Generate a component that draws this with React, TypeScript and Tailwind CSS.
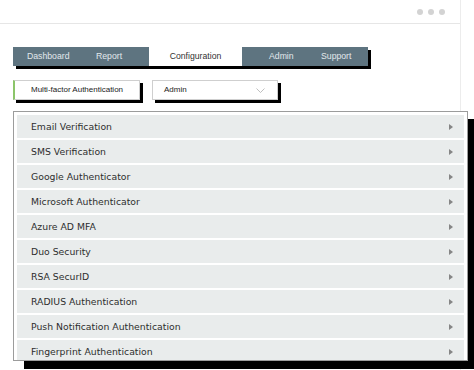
const methods = [
  "Email Verification",
  "SMS Verification",
  "Google Authenticator",
  "Microsoft Authenticator",
  "Azure AD MFA",
  "Duo Security",
  "RSA SecurID",
  "RADIUS Authentication",
  "Push Notification Authentication",
  "Fingerprint Authentication"
];

function Dots() {
  return (
    <div className="flex h-[24px] items-center justify-end gap-[5px] border-b border-[#e6e6e6] pr-[15px]">
      <span className="h-[6px] w-[6px] rounded-full bg-[#d3d3d3]" />
      <span className="h-[6px] w-[6px] rounded-full bg-[#d3d3d3]" />
      <span className="h-[6px] w-[6px] rounded-full bg-[#d3d3d3]" />
    </div>
  );
}

function NavBar() {
  return (
    <nav className="flex h-[19px] w-[355px] items-stretch bg-[#5e7480] text-[8.7px] text-[#e2e8ec] shadow-[3px_3px_0_#000]">
      <span className="flex w-[70px] items-center pl-[14px]">Dashboard</span>
      <span className="flex w-[66px] items-center pl-[13px]">Report</span>
      <span className="flex w-[93px] items-center justify-center bg-white text-[#333]">Configuration</span>
      <span className="flex w-[79px] items-center pl-[27px]">Admin</span>
      <span className="flex items-center">Support</span>
    </nav>
  );
}

function Filters() {
  return (
    <div className="mt-[14px] flex gap-[12px] text-[8px] text-[#222]">
      <div className="flex h-[20px] w-[127px] items-center border border-l-2 border-[#cfcfcf] border-l-[#8cc56a] bg-white pl-[16px] shadow-[3px_3px_0_#000]">
        Multi-factor Authentication
      </div>
      <div className="flex h-[20px] w-[126px] items-center justify-between border border-[#cfcfcf] bg-white pl-[11px] pr-[12px] shadow-[3px_3px_0_#000]">
        <span>Admin</span>
        <svg width="9" height="5" viewBox="0 0 9 5" fill="none">
          <polyline points="0.5,0.5 4.5,4.5 8.5,0.5" stroke="#b8b8b8" strokeWidth="0.9" />
        </svg>
      </div>
    </div>
  );
}

function MethodRow({ label }: { label: string }) {
  return (
    <div className="flex h-[23px] shrink-0 items-center justify-between bg-[#e9ecec] pl-[14px] pr-[11px]">
      <span>{label}</span>
      <svg width="4" height="6" viewBox="0 0 4 6">
        <polygon points="0,0 4,3 0,6" fill="#858585" />
      </svg>
    </div>
  );
}

export default function App() {
  return (
    <main className="h-[370px] w-[474px] overflow-hidden bg-white font-['Liberation_Sans',Arial,sans-serif]">
      <div className="h-[370px] w-[461px] border-r border-[#ececec]">
        <Dots />
        <div className="pl-[13px] pt-[23px]">
          <NavBar />
          <Filters />
          <section className="mt-[11px] flex h-[250px] w-[455px] flex-col gap-[2px] overflow-hidden border border-[#9c9c9c] bg-white p-[3px] font-['DejaVu_Sans',Verdana,sans-serif] text-[9.3px] text-[#2e2e2e] shadow-[11px_8px_0_#000]">
            {methods.map((m) => (
              <MethodRow key={m} label={m} />
            ))}
          </section>
        </div>
      </div>
    </main>
  );
}
